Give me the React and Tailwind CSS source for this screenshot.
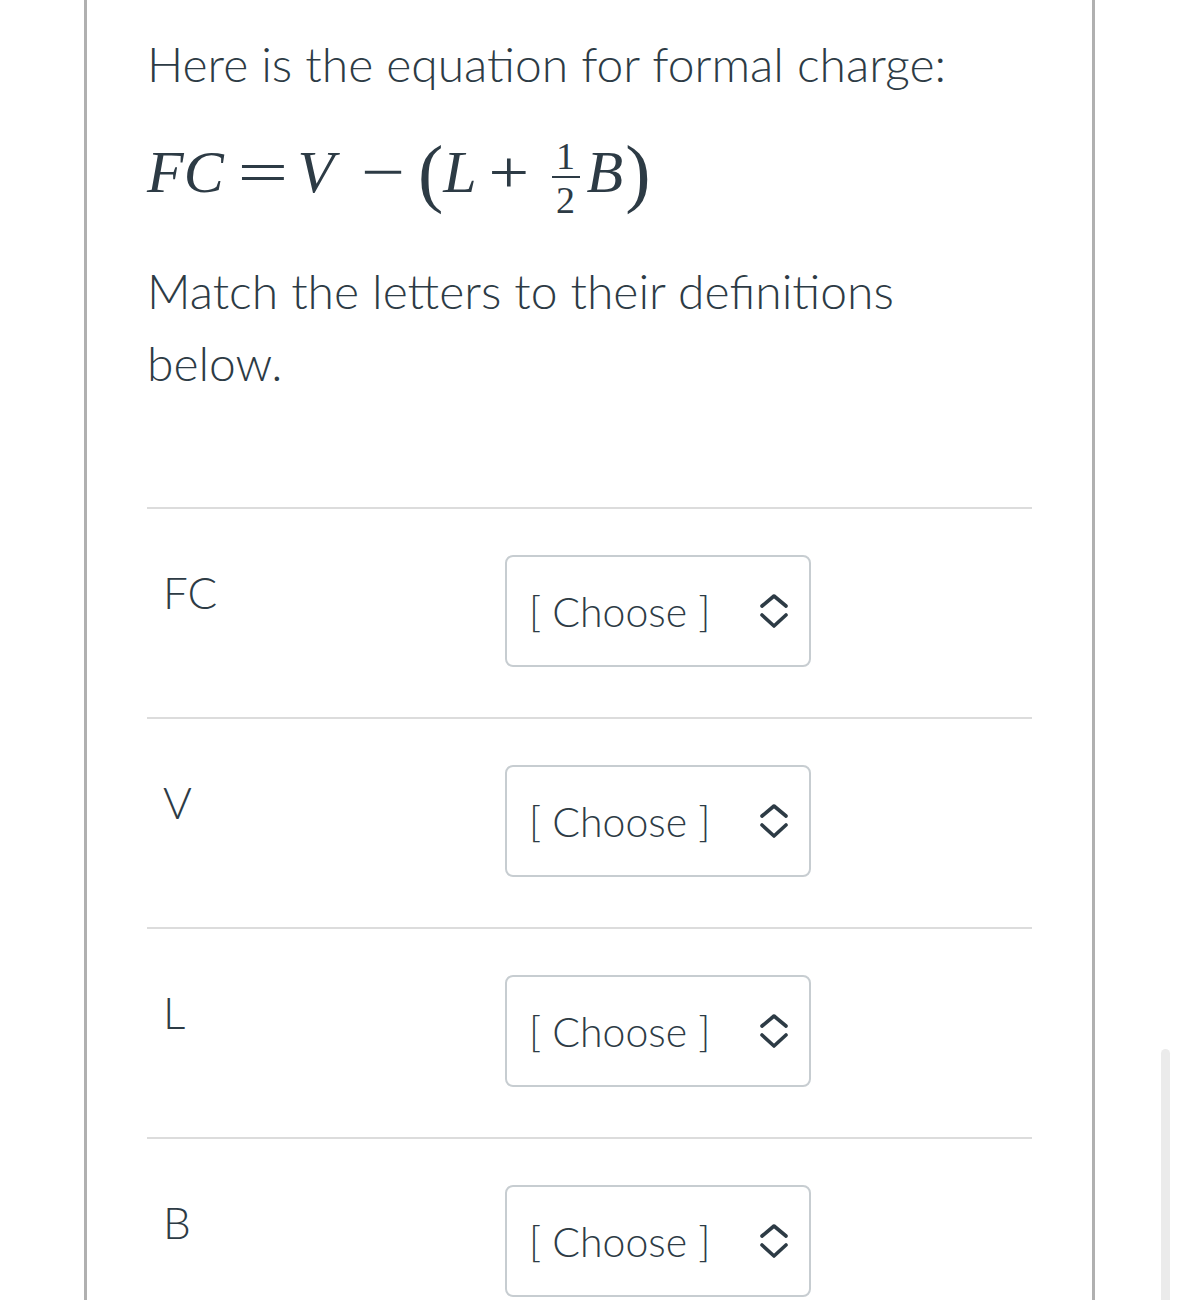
import React from 'react';

/* Colours taken from the Canvas quiz look */
const ink = 'text-[#2d3b45]';

const rows = ['FC', 'V', 'L', 'B'];

function Chevrons() {
  return (
    <svg width="30" height="36" viewBox="0 0 30 36" fill="none" aria-hidden="true">
      <path d="M3 13 L15 3 L27 13" stroke="#2d3b45" strokeWidth="3.6" strokeLinecap="round" strokeLinejoin="round" />
      <path d="M3 22 L15 33 L27 22" stroke="#2d3b45" strokeWidth="3.6" strokeLinecap="round" strokeLinejoin="round" />
    </svg>
  );
}

function ChooseSelect() {
  return (
    <div className="flex h-[112px] w-[306px] items-center justify-between rounded-lg border-2 border-[#c7cdd1] bg-white pl-[22px] pr-[20px]">
      <span className="text-[41px] font-light leading-none">[ Choose ]</span>
      <Chevrons />
    </div>
  );
}

/* FC = V − (L + ½B), set by hand in a serif italic */
function Equation() {
  const serif = { fontFamily: '"Liberation Serif", "Times New Roman", serif' };
  return (
    <div className="mt-[28px] flex h-[100px] items-center text-[60px] leading-none" style={serif}>
      <span className="pb-[12px] italic">FC</span>
      <span className="ml-[22px] inline-block scale-x-[1.5] pb-[12px]">=</span>
      <span className="ml-[18px] pb-[12px] italic">V</span>
      <span className="ml-[32px] inline-block scale-x-[1.3] pb-[12px]">−</span>
      <span className="ml-[18px] pb-[12px] text-[76px]">(</span>
      <span className="ml-[0px] pb-[12px] italic">L</span>
      <span className="ml-[15px] inline-block scale-x-[1.2] pb-[12px]">+</span>
      <span className="ml-[26px] inline-flex flex-col items-center text-[38px] leading-none" style={serif}>
        <span className="pb-[1px]">1</span>
        <span className="h-[2px] w-[28px] bg-[#2d3b45]" />
        <span className="pt-[3px]">2</span>
      </span>
      <span className="ml-[7px] pb-[12px] italic">B</span>
      <span className="ml-[2px] pb-[12px] text-[76px]">)</span>
    </div>
  );
}

export default function App() {
  return (
    <div
      className={`relative h-[1300px] w-full overflow-hidden bg-white ${ink}`}
      style={{ fontFamily: 'Lato, "Open Sans", sans-serif' }}
    >
      <div className="ml-[84px] h-full w-[1011px] border-x-[3px] border-[#b0b0b0] pl-[60px] pr-[60px]">
        <p className="pt-[28px] text-[48px] font-light leading-[72px]">
          Here is the equation for formal charge:
        </p>
        <Equation />
        <p className="mt-[27px] text-[48px] font-light leading-[72px]">
          Match the letters to their definitions
          <br />
          below.
        </p>

        <div className="mt-[108px]">
          {rows.map((r) => (
            <div key={r} className="flex items-start border-t-2 border-[#dcdcdc] pb-[50px] pt-[46px]">
              <div className="mt-[4px] w-[358px] pl-[16px] text-[44px] font-light leading-[66px]">{r}</div>
              <ChooseSelect />
            </div>
          ))}
        </div>
      </div>

      {/* scrollbar thumb */}
      <div className="absolute left-[1161px] top-[1049px] h-[300px] w-[9px] rounded-full bg-[#ebebeb]" />
    </div>
  );
}
